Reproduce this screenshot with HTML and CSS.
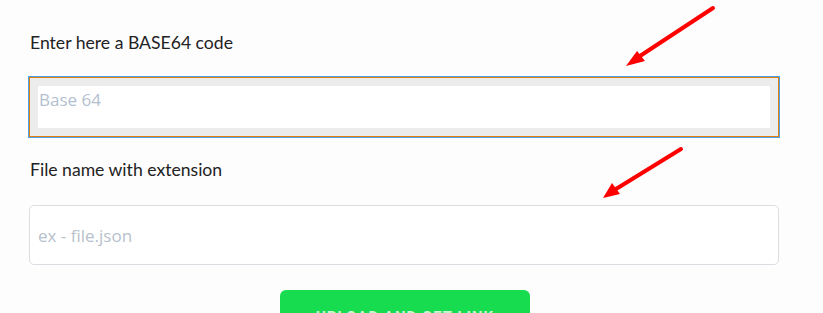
FILE: index.html
```html
<!DOCTYPE html>
<html lang="en">
<head>
    <meta charset="UTF-8">
    <meta name="viewport" content="width=device-width, initial-scale=1.0">
    <title>Base64 to file</title>
    <link rel="stylesheet" href="styles.css">
</head>
<body>

    <!-- Converter form -->
    <div class="form">
        <label class="field-label" for="base64">Enter here a BASE64 code</label>
        <div class="code-box">
            <textarea id="base64" class="code-input" placeholder="Base 64"></textarea>
        </div>

        <label class="field-label second" for="fileName">File name with extension</label>
        <input type="text" id="fileName" class="name-input" placeholder="ex - file.json">

        <div class="actions">
            <button class="upload-btn">UPLOAD AND GET LINK</button>
        </div>
    </div>

    <!-- Annotation arrows drawn over the page -->
    <svg class="arrows" width="823" height="313" viewBox="0 0 823 313">
        <g stroke="#ff0000" stroke-width="4" stroke-linecap="round" fill="none">
            <line x1="713" y1="8" x2="640" y2="56"/>
            <line x1="681" y1="149" x2="616" y2="189"/>
        </g>
        <g fill="#ff0000">
            <polygon points="626,66 637,51 645,61"/>
            <polygon points="603,198 612,183 620,194"/>
        </g>
    </svg>

</body>
</html>
```

FILE: styles.css
```css
/* Reset */
* {
    margin: 0;
    padding: 0;
    box-sizing: border-box;
}

body {
    background-color: #fdfdfe;
    font-family: Lato, "Noto Sans", sans-serif;
    position: relative;
    overflow: hidden;
    height: 313px;
}

/* Form column */
.form {
    display: flex;
    flex-direction: column;
    padding: 31px 43px 0 28px;
}

.field-label {
    font-size: 17.6px;
    color: #222;
    padding-left: 2px;
    line-height: 24px;
    margin-bottom: 21px;
}

.field-label.second {
    margin-top: 20px;
    margin-bottom: 23px;
}

/* Focused textarea box */
.code-box {
    border: 1px solid #4ba3ec;
    height: 62px;
}

.code-input {
    display: block;
    width: 100%;
    height: 100%;
    border: 1px solid #e27e0c;
    box-shadow: inset 0 0 0 8px #ececec;
    padding: 10px 9px;
    resize: none;
    outline: none;
    font-family: "Open Sans", Roboto, sans-serif;
    font-size: 17px;
    color: #333;
    background: #fff;
}

.code-input::placeholder {
    color: #b3bfcf;
}

/* File name input */
.name-input {
    margin-left: 1px;
    margin-right: 1px;
    height: 60px;
    border: 1px solid #dcdce3;
    border-radius: 5px;
    padding: 0 8px;
    font-family: "Open Sans", Roboto, sans-serif;
    font-size: 17px;
    color: #333;
    background: #fff;
    outline: none;
}

.name-input::placeholder {
    color: #b7bfcc;
}

/* Green button */
.actions {
    display: flex;
    justify-content: center;
    margin-top: 25px;
}

.upload-btn {
    width: 250px;
    height: 54px;
    margin-left: 2px;
    background-color: #17dc4f;
    color: #c9f5d4;
    border: none;
    border-radius: 6px;
    padding-top: 18px;
    font-family: Roboto, sans-serif;
    font-size: 15px;
    line-height: 18px;
    font-weight: 700;
    letter-spacing: 1px;
    display: flex;
    justify-content: center;
    align-items: flex-start;
    cursor: pointer;
}

/* Annotation arrows */
.arrows {
    position: absolute;
    top: 0;
    left: 0;
    pointer-events: none;
}
```
